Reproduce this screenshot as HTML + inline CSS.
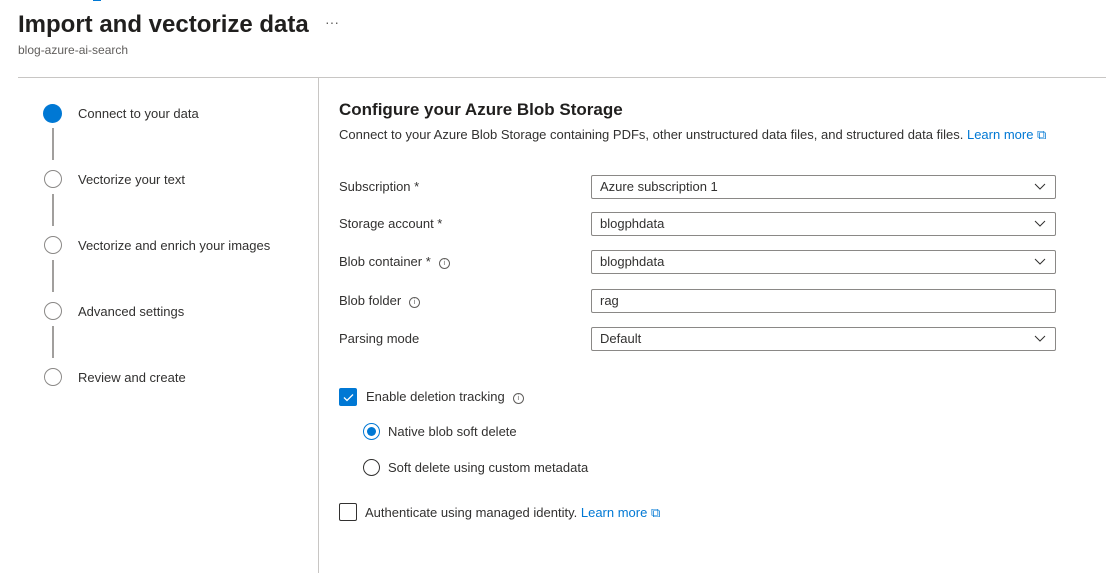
<!DOCTYPE html><html><head><style>
body{margin:0;width:1106px;height:573px;background:#fff;font-family:"Liberation Sans",sans-serif;color:#323130;position:relative;overflow:hidden;font-size:13px}
.a{position:absolute;white-space:nowrap}
.circ{position:absolute;width:16px;height:16px;border:1.5px solid #8a8886;border-radius:50%;left:44px;background:#fff}
.vl{position:absolute;left:52px;width:2px;background:#a19f9d;height:32px}
.lbl{position:absolute;left:339px}
.fld{position:absolute;left:591px;width:455px;height:22px;border:1px solid #8a8886;border-radius:2px;line-height:22px;padding-left:8px;box-sizing:content-box}
.fld svg{position:absolute;right:9px;top:7px}
.inf{display:inline-block;width:9px;height:9px;border:1px solid #605e5c;border-radius:50%;font-size:7px;line-height:9px;text-align:center;margin-left:8px;vertical-align:1px;color:#605e5c}
a{color:#0078d4;text-decoration:none}
</style></head><body>
<div class="a" style="left:93px;top:-3px;width:8px;height:4px;background:#0078d4"></div>
<div class="a" style="left:18px;top:11px;font-size:24px;color:#201f1e;font-weight:bold">Import and vectorize data</div>
<div class="a" style="left:325px;top:14px;font-size:14px;color:#605e5c">···</div>
<div class="a" style="left:18px;top:43px;font-size:12px;color:#605e5c">blog-azure-ai-search</div>
<div class="a" style="left:18px;top:77px;width:1088px;height:1px;background:#c8c6c4"></div>
<div class="a" style="left:318px;top:77px;width:1px;height:496px;background:#c8c6c4"></div>

<div class="circ" style="top:104px;background:#0078d4;border-color:#0078d4;width:19px;height:19px;left:43px;border:0"></div>
<div class="vl" style="top:128px"></div>
<div class="circ" style="top:170px"></div>
<div class="vl" style="top:194px"></div>
<div class="circ" style="top:236px"></div>
<div class="vl" style="top:260px"></div>
<div class="circ" style="top:302px"></div>
<div class="vl" style="top:326px"></div>
<div class="circ" style="top:368px"></div>
<div class="a" style="left:78px;top:106px">Connect to your data</div>
<div class="a" style="left:78px;top:172px">Vectorize your text</div>
<div class="a" style="left:78px;top:238px">Vectorize and enrich your images</div>
<div class="a" style="left:78px;top:304px">Advanced settings</div>
<div class="a" style="left:78px;top:370px">Review and create</div>

<div class="a" style="left:339px;top:100px;font-size:17px;font-weight:600;color:#201f1e">Configure your Azure Blob Storage</div>
<div class="a" style="left:339px;top:127px">Connect to your Azure Blob Storage containing PDFs, other unstructured data files, and structured data files. <a>Learn more ⧉</a></div>

<div class="lbl a" style="top:179px">Subscription *</div>
<div class="lbl a" style="top:216px">Storage account *</div>
<div class="lbl a" style="top:254px">Blob container *<span class="inf">i</span></div>
<div class="lbl a" style="top:293px">Blob folder<span class="inf">i</span></div>
<div class="lbl a" style="top:331px">Parsing mode</div>
<div class="fld" style="top:175px">Azure subscription 1<svg width="12" height="8"><path d="M1 1l5 5 5-5" stroke="#323130" fill="none"/></svg></div>
<div class="fld" style="top:212px">blogphdata<svg width="12" height="8"><path d="M1 1l5 5 5-5" stroke="#323130" fill="none"/></svg></div>
<div class="fld" style="top:250px">blogphdata<svg width="12" height="8"><path d="M1 1l5 5 5-5" stroke="#323130" fill="none"/></svg></div>
<div class="fld" style="top:289px">rag</div>
<div class="fld" style="top:327px">Default<svg width="12" height="8"><path d="M1 1l5 5 5-5" stroke="#323130" fill="none"/></svg></div>

<div class="a" style="left:339px;top:388px;width:18px;height:18px;background:#0078d4;border-radius:2px"><svg width="18" height="18"><path d="M5 9.5l3 3 6-6" stroke="#fff" stroke-width="1.3" fill="none"/></svg></div>
<div class="a" style="left:366px;top:389px">Enable deletion tracking<span class="inf">i</span></div>
<div class="a" style="left:363px;top:423px;width:15px;height:15px;border:1px solid #0078d4;border-radius:50%"><div style="position:absolute;left:3px;top:3px;width:9px;height:9px;border-radius:50%;background:#0078d4"></div></div>
<div class="a" style="left:388px;top:424px">Native blob soft delete</div>
<div class="a" style="left:363px;top:459px;width:15px;height:15px;border:1px solid #323130;border-radius:50%"></div>
<div class="a" style="left:388px;top:460px">Soft delete using custom metadata</div>
<div class="a" style="left:339px;top:503px;width:16px;height:16px;border:1px solid #323130;border-radius:2px"></div>
<div class="a" style="left:365px;top:505px">Authenticate using managed identity. <a>Learn more ⧉</a></div>
</body></html>
